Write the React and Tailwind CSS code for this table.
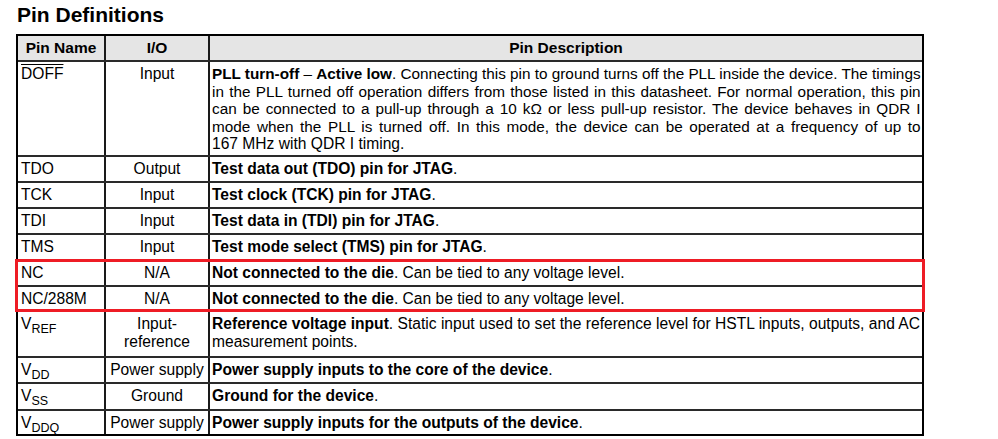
import React from "react";

const J = ({ children }) => (
  <div className="whitespace-nowrap text-justify [text-align-last:justify]">{children}</div>
);

function Row({ name, io, children, h = "h-[24px]", first = false }) {
  return (
    <div className={`flex ${first ? "" : "border-t-2 border-[#2a2a2a]"}`}>
      <div className={`w-[86px] shrink-0 ${h} pl-[3px] pt-[3px]`}>{name}</div>
      <div className="w-[104px] shrink-0 border-l-2 border-[#1a1a1a] pt-[3px] text-center">{io}</div>
      <div className="flex-1 border-l-2 border-[#1a1a1a] pl-[2px] pr-[2px] pt-[3px]">{children}</div>
    </div>
  );
}

const Sub = ({ v, s }) => (
  <span>
    {v}
    <span className="align-sub text-[12.5px] leading-none">{s}</span>
  </span>
);

export default function App() {
  return (
    <div
      className="w-[998px] h-[439px] bg-white text-black overflow-hidden"
      style={{ fontFamily: '"Liberation Sans", Arial, sans-serif' }}
    >
      <div className="pl-[17px] pt-[3px] h-[27px] text-[21px] leading-[24px] font-bold">Pin Definitions</div>
      <div className="ml-[16px] mt-[7px] w-[908px] border-2 border-black text-[15.6px] leading-[17.5px]">
        <div className="flex bg-[#e5e5e5] font-bold text-[15.5px]">
          <div className="w-[86px] shrink-0 h-[24px] pt-[3px] text-center">Pin Name</div>
          <div className="w-[104px] shrink-0 border-l-2 border-[#1a1a1a] pt-[3px] text-center">I/O</div>
          <div className="flex-1 border-l-2 border-[#1a1a1a] pt-[3px] text-center">Pin Description</div>
        </div>
        <Row name={<span className="overline">DOFF</span>} io="Input" h="h-[93px]">
          <div className="text-[15.3px]">
            <J>
              <b>PLL turn-off</b> – <b>Active low</b>. Connecting this pin to ground turns off the PLL inside the device. The timings
            </J>
            <J>in the PLL turned off operation differs from those listed in this datasheet. For normal operation, this pin</J>
            <J>can be connected to a pull-up through a 10 kΩ or less pull-up resistor. The device behaves in QDR I</J>
            <J>mode when the PLL is turned off. In this mode, the device can be operated at a frequency of up to</J>
            <div className="text-[15.6px]">167 MHz with QDR I timing.</div>
          </div>
        </Row>
        <Row name="TDO" io="Output">
          <b>Test data out (TDO) pin for JTAG</b>.
        </Row>
        <Row name="TCK" io="Input">
          <b>Test clock (TCK) pin for JTAG</b>.
        </Row>
        <Row name="TDI" io="Input">
          <b>Test data in (TDI) pin for JTAG</b>.
        </Row>
        <Row name="TMS" io="Input">
          <b>Test mode select (TMS) pin for JTAG</b>.
        </Row>
        <div className="relative">
          <Row name="NC" io="N/A">
            <b>Not connected to the die</b>. Can be tied to any voltage level.
          </Row>
          <Row name="NC/288M" io="N/A" h="h-[23px]">
            <b>Not connected to the die</b>. Can be tied to any voltage level.
          </Row>
          <div className="absolute left-[-3px] right-[-3px] top-[0px] bottom-[-2px] border-[3px] border-[#ee1c25]"></div>
        </div>
        <Row name={<Sub v="V" s="REF" />} io={<><div>Input-</div><div>reference</div></>} h="h-[44px]">
          <J>
            <b>Reference voltage input</b>. Static input used to set the reference level for HSTL inputs, outputs, and AC
          </J>
          <div>measurement points.</div>
        </Row>
        <Row name={<Sub v="V" s="DD" />} io="Power supply">
          <b>Power supply inputs to the core of the device</b>.
        </Row>
        <Row name={<Sub v="V" s="SS" />} io="Ground" h="h-[25px]">
          <b>Ground for the device</b>.
        </Row>
        <Row name={<Sub v="V" s="DDQ" />} io="Power supply" h="h-[23px]">
          <b>Power supply inputs for the outputs of the device</b>.
        </Row>
      </div>
    </div>
  );
}
